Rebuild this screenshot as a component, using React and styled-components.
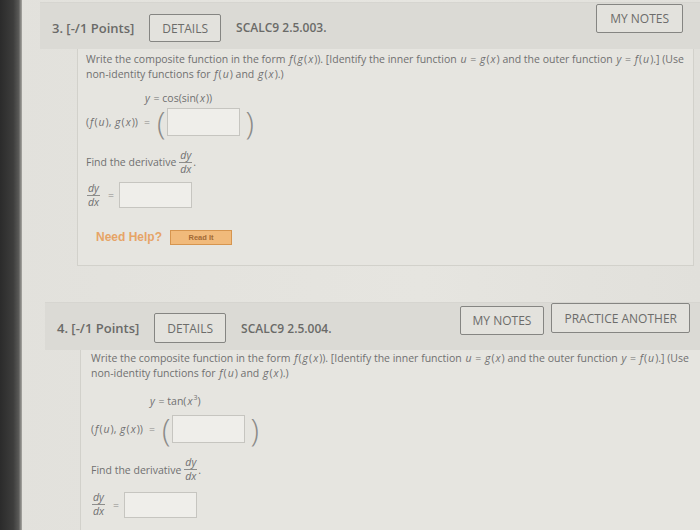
import React from "react";
import styled, { createGlobalStyle } from "styled-components";

const Global = createGlobalStyle`
  html, body { margin: 0; padding: 0; }
  body {
    background: #e4e3de;
    font-family: "Open Sans", "Noto Sans", sans-serif;
    color: #6e6e6c;
  }
`;

const Page = styled.div`
  display: flex;
  width: 700px;
  height: 530px;
  overflow: hidden;
  background: linear-gradient(90deg, #e2e1dc 0%, #e6e5e0 60%, #e1e0db 100%);
`;

const Bezel = styled.div`
  width: 22px;
  flex-shrink: 0;
  background: linear-gradient(90deg, #2b2b2b 0%, #3d3d3c 60%, #5a5a58 85%, #a9a8a3 100%);
`;

const Main = styled.div`
  flex: 1;
  display: flex;
  flex-direction: column;
  padding-top: 2px;
`;

const Question = styled.section`
  margin-left: ${(p) => p.$indent}px;
  margin-bottom: ${(p) => p.$gap || 0}px;
`;

const Header = styled.div`
  height: ${(p) => p.$h || 46}px;
  display: flex;
  align-items: center;
  padding: 0 ${(p) => p.$right}px 0 12px;
  background: #dbdad5;
  border-top: 1px solid #d6d5d0;
`;

const Number = styled.span`
  font-size: 13px;
  font-weight: 600;
  color: #6a6a68;
  margin-top: 3px;
`;

const Button = styled.div`
  height: ${(p) => p.$h || 28}px;
  padding: 0 ${(p) => p.$pad || 12}px;
  display: flex;
  align-items: center;
  border: 1.5px solid #858582;
  border-radius: 2px;
  background: #e3e2dd;
  font-size: 12px;
  color: #6c6c6a;
  box-sizing: border-box;
  margin-left: ${(p) => p.$ml || 0}px;
  margin-top: ${(p) => p.$mt || 0}px;
`;

const Code = styled.span`
  font-size: 12px;
  font-weight: 600;
  color: #6a6a68;
  margin-left: ${(p) => p.$ml}px;
  margin-top: 3px;
`;

const Right = styled.div`
  margin-left: auto;
  align-self: flex-start;
  display: flex;
  gap: 7px;
  margin-top: ${(p) => p.$mt}px;
`;

const Body = styled.div`
  margin-left: ${(p) => p.$indent}px;
  padding: ${(p) => p.$top}px 0 ${(p) => p.$bottom}px ${(p) => p.$pad}px;
  background: #e6e5e0;
  border-left: 1px solid #d2d1cb;
  border-bottom: ${(p) => (p.$closed ? "1px solid #d2d1cb" : "none")};
  border-right: ${(p) => (p.$closed ? "1px solid #d2d1cb" : "none")};
  margin-right: ${(p) => (p.$closed ? 6 : 0)}px;
  font-size: 10.5px;
  color: #707070;
`;

const Prompt = styled.p`
  margin: 0;
  line-height: 15px;
  width: 600px;
`;

const I = styled.i`
  font-style: italic;
  padding: 0 1px;
`;

const Display = styled.div`
  margin: 9px 0 0 58px;
  line-height: 15px;
`;

const AnswerRow = styled.div`
  display: flex;
  align-items: center;
  margin-top: ${(p) => p.$mt}px;
  height: ${(p) => p.$h}px;
`;

const Label = styled.span`
  white-space: nowrap;
`;

const Paren = styled.span`
  font-size: 31px;
  font-weight: 300;
  line-height: 28px;
  color: #8b8b89;
  margin: 0 ${(p) => p.$r || 2}px 0 ${(p) => p.$l || 2}px;
`;

const Box = styled.div`
  width: 73px;
  height: ${(p) => p.$h || 28}px;
  box-sizing: border-box;
  border: 1px solid #c6c5c0;
  background: #efeeea;
`;

const Frac = styled.span`
  display: inline-flex;
  flex-direction: column;
  align-items: center;
  font-style: italic;
  line-height: 11px;
  margin: 0 ${(p) => p.$mr || 2}px 0 ${(p) => p.$ml || 2}px;
  span:first-child {
    border-bottom: 1px solid #8d8d8b;
    padding: 0 1px 1px;
  }
  span:last-child {
    padding-top: 1px;
  }
`;

const Eq = styled.span`
  margin: 0 5px 0 6px;
  color: #8a8a88;
`;

const Help = styled.div`
  display: flex;
  align-items: center;
  margin: 21px 0 0 10px;
  height: 16px;
`;

const HelpLabel = styled.span`
  font-family: "Liberation Sans", Arial, sans-serif;
  font-weight: 700;
  font-size: 12px;
  color: #e6a467;
`;

const ReadIt = styled.div`
  width: 62px;
  height: 15px;
  margin-left: 8px;
  box-sizing: border-box;
  border: 1.5px solid #d6954f;
  background: #f1ba7b;
  display: flex;
  align-items: center;
  justify-content: center;
  font-family: "Liberation Sans", Arial, sans-serif;
  font-weight: 700;
  font-size: 7.5px;
  color: #a26a36;
`;

const PromptText = () => (
  <Prompt>
    Write the composite function in the form <I>f</I>(<I>g</I>(<I>x</I>)). [Identify the inner function{" "}
    <I>u</I> = <I>g</I>(<I>x</I>) and the outer function <I>y</I> = <I>f</I>(<I>u</I>).] (Use non-identity
    functions for <I>f</I>(<I>u</I>) and <I>g</I>(<I>x</I>).)
  </Prompt>
);

const Problem = ({ expr, help, spread = 0 }) => (
  <>
    <PromptText />
    <Display>{expr}</Display>
    <AnswerRow $mt={2 + spread * 4} $h={28}>
      <Label>
        (<I>f</I>(<I>u</I>), <I>g</I>(<I>x</I>))
      </Label>
      <Eq>=</Eq>
      <Paren $l={0}>(</Paren>
      <Box />
      <Paren $l={5}>)</Paren>
    </AnswerRow>
    <AnswerRow $mt={14 + spread} $h={24}>
      <Label>Find the derivative</Label>
      <Frac $ml={3} $mr={1}>
        <span>dy</span>
        <span>dx</span>
      </Frac>
      <Label>.</Label>
    </AnswerRow>
    <AnswerRow $mt={8 + spread * 2} $h={26}>
      <Frac $ml={1} $mr={0}>
        <span>dy</span>
        <span>dx</span>
      </Frac>
      <Eq>=</Eq>
      <Box $h={26} />
    </AnswerRow>
    {help && (
      <Help>
        <HelpLabel>Need Help?</HelpLabel>
        <ReadIt>Read It</ReadIt>
      </Help>
    )}
  </>
);

export default function App() {
  return (
    <Page>
      <Global />
      <Bezel />
      <Main>
        <Question $indent={18} $gap={36}>
          <Header $right={17}>
            <Number>3. [-/1 Points]</Number>
            <Button $ml={15} $pad={12} $mt={4}>DETAILS</Button>
            <Code $ml={15}>SCALC9 2.5.003.</Code>
            <Right $mt={1}>
              <Button $h={29} $pad={13}>MY NOTES</Button>
            </Right>
          </Header>
          <Body $indent={37} $pad={8} $top={3} $bottom={20} $closed>
            <Problem
              help
              expr={
                <>
                  <I>y</I> = cos(sin(<I>x</I>))
                </>
              }
            />
          </Body>
        </Question>
        <Question $indent={23}>
          <Header $right={10} $h={47}>
            <Number>4. [-/1 Points]</Number>
            <Button $ml={15} $pad={12} $h={30} $mt={3}>DETAILS</Button>
            <Code $ml={15}>SCALC9 2.5.004.</Code>
            <Right $mt={0}>
              <Button $h={29} $pad={12} $mt={3}>MY NOTES</Button>
              <Button $h={30} $pad={12}>PRACTICE ANOTHER</Button>
            </Right>
          </Header>
          <Body $indent={35} $pad={10} $top={1} $bottom={20}>
            <Problem
              spread={1}
              expr={
                <>
                  <I>y</I> = tan(<I>x</I>
                  <sup style={{ fontSize: "7px" }}>3</sup>)
                </>
              }
            />
          </Body>
        </Question>
      </Main>
    </Page>
  );
}
